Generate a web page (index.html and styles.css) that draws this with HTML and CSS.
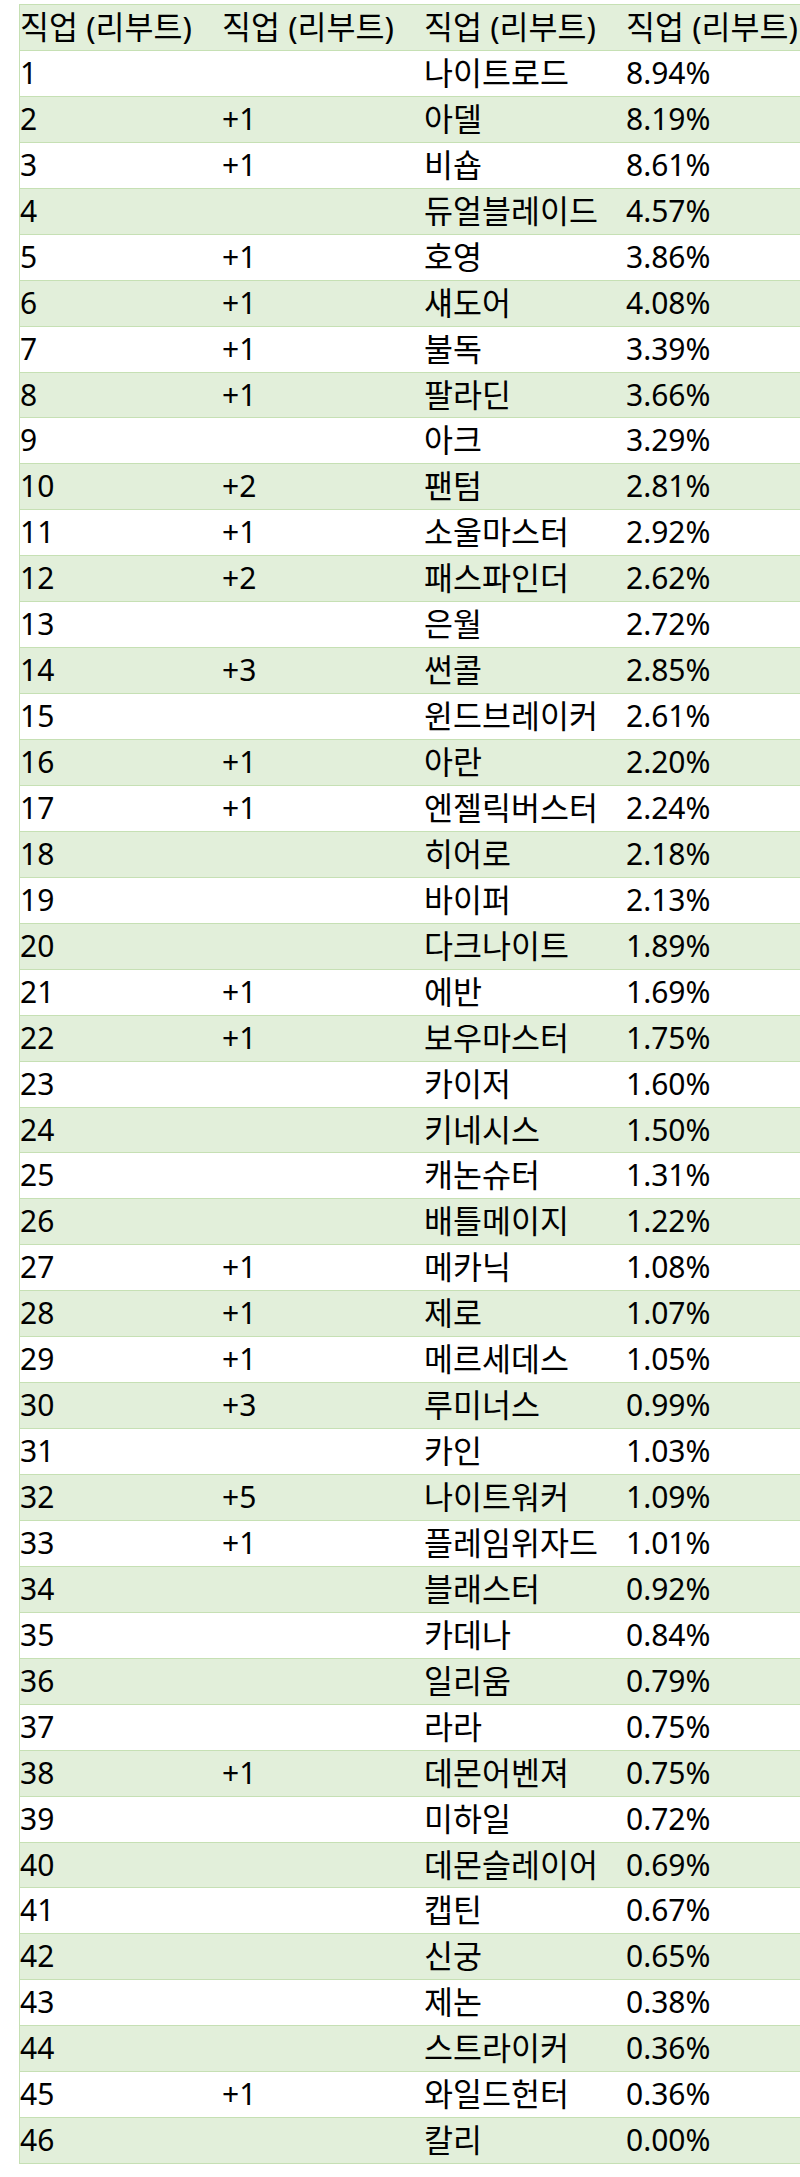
FILE: index.html
```html
<!DOCTYPE html>
<html lang="ko">
<head>
<meta charset="utf-8">
<title>직업 (리부트)</title>
<link rel="stylesheet" href="styles.css">
</head>
<body>
<div class="sheet">
  <div class="row alt head"><div class="cell ko">직업 (리부트)</div><div class="cell ko">직업 (리부트)</div><div class="cell ko">직업 (리부트)</div><div class="cell ko">직업 (리부트)</div></div>
  <div class="row"><div class="cell">1</div><div class="cell"></div><div class="cell ko">나이트로드</div><div class="cell">8.94%</div></div>
  <div class="row alt"><div class="cell">2</div><div class="cell">+1</div><div class="cell ko">아델</div><div class="cell">8.19%</div></div>
  <div class="row"><div class="cell">3</div><div class="cell">+1</div><div class="cell ko">비숍</div><div class="cell">8.61%</div></div>
  <div class="row alt"><div class="cell">4</div><div class="cell"></div><div class="cell ko">듀얼블레이드</div><div class="cell">4.57%</div></div>
  <div class="row"><div class="cell">5</div><div class="cell">+1</div><div class="cell ko">호영</div><div class="cell">3.86%</div></div>
  <div class="row alt"><div class="cell">6</div><div class="cell">+1</div><div class="cell ko">섀도어</div><div class="cell">4.08%</div></div>
  <div class="row"><div class="cell">7</div><div class="cell">+1</div><div class="cell ko">불독</div><div class="cell">3.39%</div></div>
  <div class="row alt"><div class="cell">8</div><div class="cell">+1</div><div class="cell ko">팔라딘</div><div class="cell">3.66%</div></div>
  <div class="row"><div class="cell">9</div><div class="cell"></div><div class="cell ko">아크</div><div class="cell">3.29%</div></div>
  <div class="row alt"><div class="cell">10</div><div class="cell">+2</div><div class="cell ko">팬텀</div><div class="cell">2.81%</div></div>
  <div class="row"><div class="cell">11</div><div class="cell">+1</div><div class="cell ko">소울마스터</div><div class="cell">2.92%</div></div>
  <div class="row alt"><div class="cell">12</div><div class="cell">+2</div><div class="cell ko">패스파인더</div><div class="cell">2.62%</div></div>
  <div class="row"><div class="cell">13</div><div class="cell"></div><div class="cell ko">은월</div><div class="cell">2.72%</div></div>
  <div class="row alt"><div class="cell">14</div><div class="cell">+3</div><div class="cell ko">썬콜</div><div class="cell">2.85%</div></div>
  <div class="row"><div class="cell">15</div><div class="cell"></div><div class="cell ko">윈드브레이커</div><div class="cell">2.61%</div></div>
  <div class="row alt"><div class="cell">16</div><div class="cell">+1</div><div class="cell ko">아란</div><div class="cell">2.20%</div></div>
  <div class="row"><div class="cell">17</div><div class="cell">+1</div><div class="cell ko">엔젤릭버스터</div><div class="cell">2.24%</div></div>
  <div class="row alt"><div class="cell">18</div><div class="cell"></div><div class="cell ko">히어로</div><div class="cell">2.18%</div></div>
  <div class="row"><div class="cell">19</div><div class="cell"></div><div class="cell ko">바이퍼</div><div class="cell">2.13%</div></div>
  <div class="row alt"><div class="cell">20</div><div class="cell"></div><div class="cell ko">다크나이트</div><div class="cell">1.89%</div></div>
  <div class="row"><div class="cell">21</div><div class="cell">+1</div><div class="cell ko">에반</div><div class="cell">1.69%</div></div>
  <div class="row alt"><div class="cell">22</div><div class="cell">+1</div><div class="cell ko">보우마스터</div><div class="cell">1.75%</div></div>
  <div class="row"><div class="cell">23</div><div class="cell"></div><div class="cell ko">카이저</div><div class="cell">1.60%</div></div>
  <div class="row alt"><div class="cell">24</div><div class="cell"></div><div class="cell ko">키네시스</div><div class="cell">1.50%</div></div>
  <div class="row"><div class="cell">25</div><div class="cell"></div><div class="cell ko">캐논슈터</div><div class="cell">1.31%</div></div>
  <div class="row alt"><div class="cell">26</div><div class="cell"></div><div class="cell ko">배틀메이지</div><div class="cell">1.22%</div></div>
  <div class="row"><div class="cell">27</div><div class="cell">+1</div><div class="cell ko">메카닉</div><div class="cell">1.08%</div></div>
  <div class="row alt"><div class="cell">28</div><div class="cell">+1</div><div class="cell ko">제로</div><div class="cell">1.07%</div></div>
  <div class="row"><div class="cell">29</div><div class="cell">+1</div><div class="cell ko">메르세데스</div><div class="cell">1.05%</div></div>
  <div class="row alt"><div class="cell">30</div><div class="cell">+3</div><div class="cell ko">루미너스</div><div class="cell">0.99%</div></div>
  <div class="row"><div class="cell">31</div><div class="cell"></div><div class="cell ko">카인</div><div class="cell">1.03%</div></div>
  <div class="row alt"><div class="cell">32</div><div class="cell">+5</div><div class="cell ko">나이트워커</div><div class="cell">1.09%</div></div>
  <div class="row"><div class="cell">33</div><div class="cell">+1</div><div class="cell ko">플레임위자드</div><div class="cell">1.01%</div></div>
  <div class="row alt"><div class="cell">34</div><div class="cell"></div><div class="cell ko">블래스터</div><div class="cell">0.92%</div></div>
  <div class="row"><div class="cell">35</div><div class="cell"></div><div class="cell ko">카데나</div><div class="cell">0.84%</div></div>
  <div class="row alt"><div class="cell">36</div><div class="cell"></div><div class="cell ko">일리움</div><div class="cell">0.79%</div></div>
  <div class="row"><div class="cell">37</div><div class="cell"></div><div class="cell ko">라라</div><div class="cell">0.75%</div></div>
  <div class="row alt"><div class="cell">38</div><div class="cell">+1</div><div class="cell ko">데몬어벤져</div><div class="cell">0.75%</div></div>
  <div class="row"><div class="cell">39</div><div class="cell"></div><div class="cell ko">미하일</div><div class="cell">0.72%</div></div>
  <div class="row alt"><div class="cell">40</div><div class="cell"></div><div class="cell ko">데몬슬레이어</div><div class="cell">0.69%</div></div>
  <div class="row"><div class="cell">41</div><div class="cell"></div><div class="cell ko">캡틴</div><div class="cell">0.67%</div></div>
  <div class="row alt"><div class="cell">42</div><div class="cell"></div><div class="cell ko">신궁</div><div class="cell">0.65%</div></div>
  <div class="row"><div class="cell">43</div><div class="cell"></div><div class="cell ko">제논</div><div class="cell">0.38%</div></div>
  <div class="row alt"><div class="cell">44</div><div class="cell"></div><div class="cell ko">스트라이커</div><div class="cell">0.36%</div></div>
  <div class="row"><div class="cell">45</div><div class="cell">+1</div><div class="cell ko">와일드헌터</div><div class="cell">0.36%</div></div>
  <div class="row alt last"><div class="cell">46</div><div class="cell"></div><div class="cell ko">칼리</div><div class="cell">0.00%</div></div>
</div>
</body>
</html>
```

FILE: styles.css
```css
html, body {
  margin: 0;
  padding: 0;
  overflow: hidden;
  background: #ffffff;
}

body {
  font-family: "Noto Sans", "Noto Sans CJK KR", sans-serif;
  font-size: 30px;
  color: #000000;
}

.sheet {
  margin: 4px 0 0 19px;
  width: 809px;
  border-left: 1px solid #c6e0b4;
}

.row {
  display: grid;
  grid-template-columns: repeat(4, 202px);
  box-sizing: border-box;
  height: 45.94px;
  border-top: 1px solid #c6e0b4;
}

.row.last {
  height: 46.94px;
  border-bottom: 1px solid #c6e0b4;
}

.row.alt {
  background: #e2efda;
}

.cell {
  line-height: 30px;
  padding-top: 7px;
  white-space: nowrap;
}

.cell.ko {
  font-size: 31.5px;
}
```
